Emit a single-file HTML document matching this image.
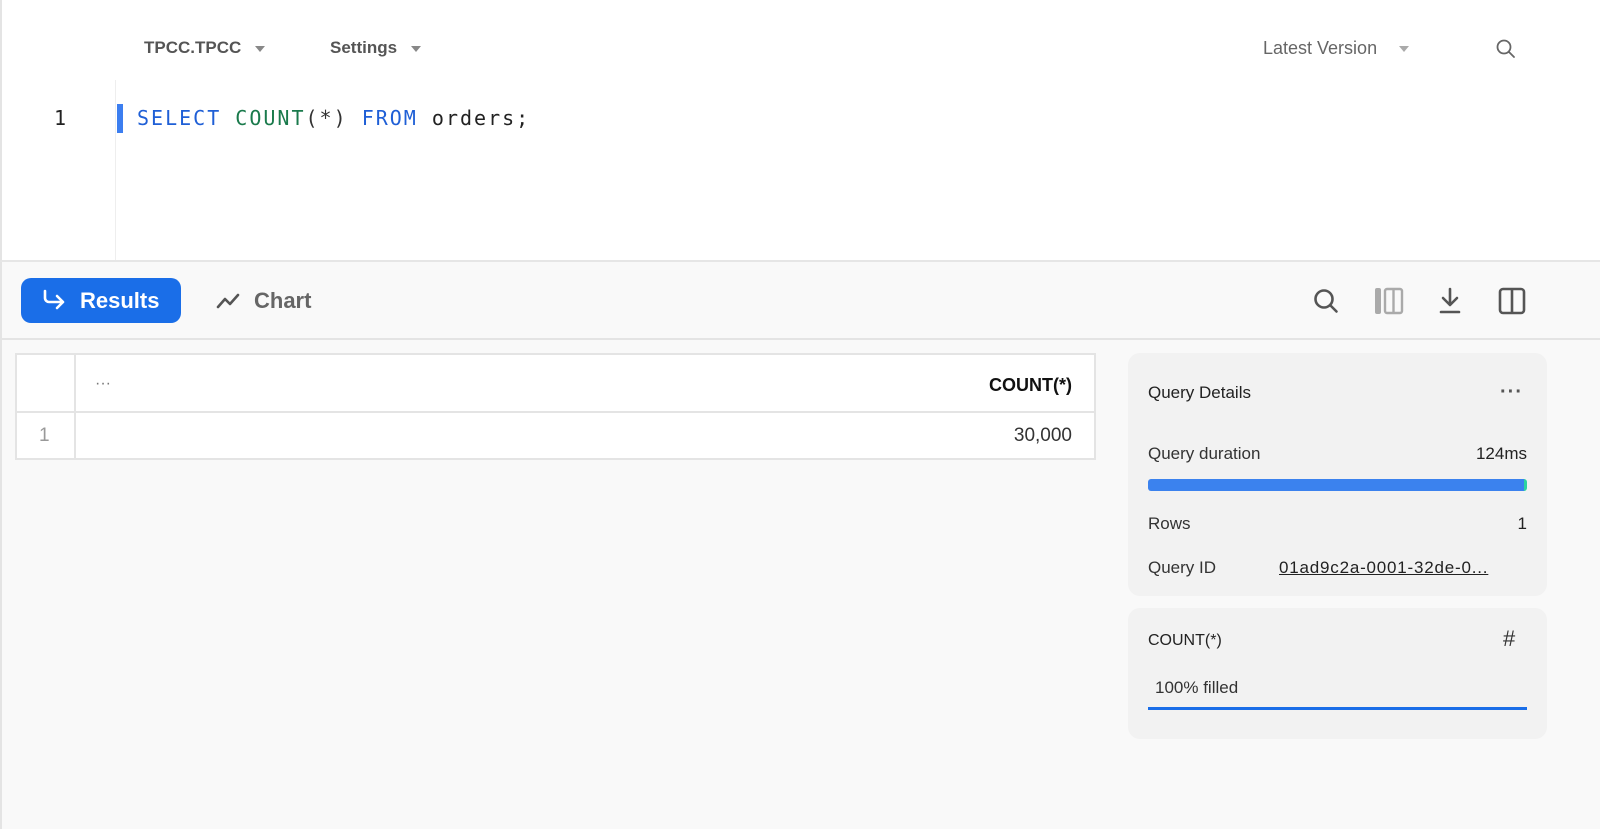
<!DOCTYPE html>
<html><head><style>
*{margin:0;padding:0;box-sizing:border-box}
body{width:1600px;height:829px;overflow:hidden;font-family:"Liberation Sans",sans-serif;background:#f9f9f9;position:relative}
.abs{position:absolute}
.editor{left:0;top:0;width:1600px;height:262px;background:#fff;border-left:2px solid #e4e4e4;border-bottom:2px solid #e6e6e6}
.tri{display:inline-block;width:0;height:0;border-left:5px solid transparent;border-right:5px solid transparent;border-top:6px solid #888;vertical-align:middle;margin-left:14px}
.mono{font-family:"DejaVu Sans Mono","Liberation Mono",monospace;font-size:20px}
.table{left:15px;top:353px;width:1081px;height:107px;background:#fff;border:2px solid #e4e4e4}
.card{background:#f2f2f2;border-radius:12px}
.t15{font-size:17px;color:#333}
</style></head><body>
<div class="abs editor">
 <div class="abs" style="left:142px;top:38px;font-size:17px;color:#555;font-weight:bold">TPCC.TPCC<span class="tri"></span></div>
 <div class="abs" style="left:328px;top:38px;font-size:17px;color:#555;font-weight:bold">Settings<span class="tri"></span></div>
 <div class="abs" style="left:1261px;top:38px;font-size:18px;color:#666">Latest Version<span class="tri" style="margin-left:22px;border-top-color:#aaa"></span></div>
 <svg class="abs" style="left:1493px;top:38px" width="22" height="22" viewBox="0 0 22 22"><circle cx="9" cy="9" r="6.5" fill="none" stroke="#666" stroke-width="1.8"/><path d="M14 14l5 5" stroke="#666" stroke-width="1.8" stroke-linecap="round"/></svg>
 <div class="abs" style="left:113px;top:80px;width:1px;height:180px;background:#eee"></div>
 <div class="abs mono" style="left:52px;top:106px;color:#222">1</div>
 <div class="abs" style="left:115px;top:104px;width:6px;height:29px;background:#3c7ef0"></div>
 <div class="abs mono" style="left:135px;top:106px;white-space:pre;letter-spacing:2px"><span style="color:#1f5fd6">SELECT</span> <span style="color:#1a7a4c">COUNT</span><span style="color:#333">(*)</span> <span style="color:#1f5fd6">FROM</span> <span style="color:#222">orders;</span></div>
</div>
<div class="abs" style="left:0;top:262px;width:2px;height:567px;background:#e4e4e4"></div>
<div class="abs" style="left:21px;top:278px;width:160px;height:45px;background:#1a6ee8;border-radius:10px;color:#fff;font-weight:bold;font-size:22px">
 <svg class="abs" style="left:20px;top:11px" width="26" height="22" viewBox="0 0 26 22"><path d="M4 2v7a4 4 0 0 0 4 4h14M16 7l6 6-6 6" fill="none" stroke="#fff" stroke-width="2.6" stroke-linecap="round" stroke-linejoin="round"/></svg>
 <span class="abs" style="left:59px;top:10px">Results</span></div>
<svg class="abs" style="left:216px;top:291px" width="24" height="20" viewBox="0 0 24 20"><path d="M2 16l7-8 5 5 8-9" fill="none" stroke="#555" stroke-width="2.6" stroke-linecap="round" stroke-linejoin="round"/></svg>
<div class="abs" style="left:254px;top:288px;font-size:22px;font-weight:bold;color:#666">Chart</div>
<svg class="abs" style="left:1312px;top:287px" width="28" height="28" viewBox="0 0 28 28"><circle cx="12" cy="12" r="8.5" fill="none" stroke="#555" stroke-width="2.6"/><path d="M18.5 18.5l6 6" stroke="#555" stroke-width="2.6" stroke-linecap="round"/></svg>
<svg class="abs" style="left:1374px;top:287px" width="30" height="28" viewBox="0 0 30 28"><rect x="1" y="1" width="6" height="26" rx="2" fill="#aaa"/><rect x="11" y="2" width="17" height="24" rx="2" fill="none" stroke="#aaa" stroke-width="2.4"/><path d="M19.5 2v24" stroke="#aaa" stroke-width="2.4"/></svg>
<svg class="abs" style="left:1438px;top:287px" width="24" height="28" viewBox="0 0 24 28"><path d="M12 2v15M5 11l7 7 7-7" fill="none" stroke="#555" stroke-width="2.6" stroke-linecap="round" stroke-linejoin="round"/><path d="M3 25h18" stroke="#555" stroke-width="2.6" stroke-linecap="round"/></svg>
<svg class="abs" style="left:1498px;top:287px" width="28" height="28" viewBox="0 0 28 28"><rect x="2" y="2" width="24" height="24" rx="3" fill="none" stroke="#555" stroke-width="2.6"/><path d="M14 2v24" stroke="#555" stroke-width="2.6"/></svg>
<div class="abs" style="left:0;top:338px;width:1600px;height:2px;background:#e4e4e4"></div>
<div class="abs table">
 <div class="abs" style="left:57px;top:0;width:2px;height:103px;background:#e4e4e4"></div>
 <div class="abs" style="left:0;top:56px;width:1077px;height:2px;background:#e4e4e4"></div>
 <div class="abs" style="left:78px;top:20px;color:#777;font-size:16px">···</div>
 <div class="abs" style="right:22px;top:20px;font-weight:bold;font-size:18px;color:#111">COUNT(*)</div>
 <div class="abs" style="left:22px;top:70px;font-size:19px;color:#999">1</div>
 <div class="abs" style="right:22px;top:70px;font-size:19px;color:#333">30,000</div>
</div>
<div class="abs card" style="left:1128px;top:353px;width:419px;height:243px">
 <div class="abs t15" style="left:20px;top:30px;color:#222">Query Details</div>
 <div class="abs" style="left:372px;top:28px;font-size:20px;font-weight:bold;color:#555;letter-spacing:1px">···</div>
 <div class="abs t15" style="left:20px;top:91px">Query duration</div>
 <div class="abs t15" style="right:20px;top:91px;color:#222">124ms</div>
 <div class="abs" style="left:20px;top:126px;width:379px;height:12px;background:#3b82ee;border-radius:3px;border-right:3px solid #2dd4a0"></div>
 <div class="abs t15" style="left:20px;top:161px">Rows</div>
 <div class="abs t15" style="right:20px;top:161px;color:#222">1</div>
 <div class="abs t15" style="left:20px;top:205px">Query ID</div>
 <div class="abs t15" style="left:151px;top:205px;color:#222;text-decoration:underline;letter-spacing:0.8px">01ad9c2a-0001-32de-0...</div>
</div>
<div class="abs card" style="left:1128px;top:608px;width:419px;height:131px">
 <div class="abs" style="left:20px;top:24px;font-size:16px;color:#222">COUNT(*)</div>
 <div class="abs" style="left:375px;top:18px;font-size:22px;color:#333">#</div>
 <div class="abs t15" style="left:27px;top:70px">100% filled</div>
 <div class="abs" style="left:20px;top:99px;width:379px;height:3px;background:#1a6ee8"></div>
</div>
</body></html>
